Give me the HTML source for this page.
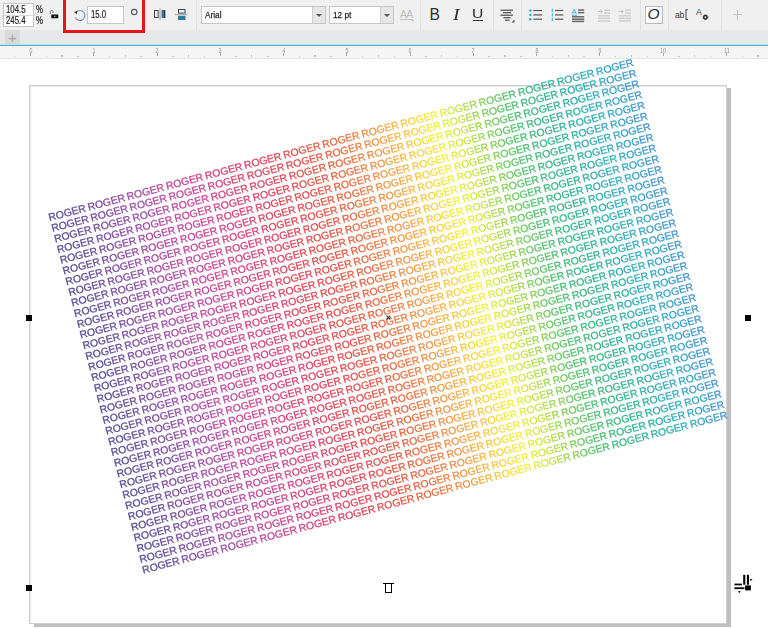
<!DOCTYPE html>
<html>
<head>
<meta charset="utf-8">
<title>Rotate text</title>
<style>
html,body{margin:0;padding:0;}
body{width:768px;height:628px;position:relative;overflow:hidden;background:#fff;font-family:"Liberation Sans",sans-serif;}
.abs{position:absolute;}
#toolbar{left:0;top:0;width:768px;height:30px;background:#f0f0f0;}
#tabstrip{left:0;top:30px;width:768px;height:15px;background:#e7e8e9;}
#tabplus{left:5px;top:30px;width:15px;height:15px;background:#dadada;color:#a6a6a6;font-size:15px;line-height:15px;text-align:center;}
#cyan{left:0;top:44px;width:768px;height:2px;background:linear-gradient(#b4e2ee 0,#b4e2ee 50%,#4fb0cc 50%,#4fb0cc 100%);}
#ruler{left:0;top:46px;width:768px;height:12px;background:#f5f5f5;border-bottom:1px solid #e4e4e4;}
#page{left:29px;top:85px;width:698px;height:539px;border:1px solid #cfcfcf;box-sizing:border-box;background:#fff;box-shadow:inset 1px 1px 0 #e9e9e9;}
#shadR{left:726px;top:88px;width:5px;height:539px;background:#bfbfbf;}
#shadB{left:34px;top:624px;width:697px;height:3px;background:#bfbfbf;}
.h{width:6px;height:6px;background:#000;}
.tb{font-size:11px;color:#222;white-space:nowrap;}
.sq{transform-origin:0 50%;transform:scaleX(0.78);-webkit-text-stroke:0.2px #222;}
.sq2{transform-origin:0 50%;transform:scaleX(0.86);-webkit-text-stroke:0.25px #222;}
.box{background:#fff;border:1px solid #c6c6c6;box-sizing:border-box;}
.sep{width:1px;background:#e0e0e0;top:0px;height:30px;}
#roger{left:0;top:0;width:6400px;transform-origin:0 0;transform:translate(47.2px,212.3px) rotate(-14.9deg) scale(0.1);
 font-family:"Liberation Sans",sans-serif;font-size:104.5px;line-height:110.55px;white-space:pre;word-spacing:-7.5px;
 background:linear-gradient(to right,#48448f 0%,#664496 6%,#8c42a0 12%,#a840a0 17%,#c03c98 22%,#cc3a84 27%,#d83a64 33%,#e04048 40%,#e25636 47%,#ea7c3a 53%,#f2a63a 58%,#f4d030 62%,#f2f028 66%,#c4e038 70%,#90d048 73%,#5cc458 76%,#38b870 80%,#28b088 84%,#22aaa0 88%,#26a8b8 92%,#2c9cc4 96%,#3a8cc8 100%);
 background-size:6050px 100%;background-repeat:no-repeat;
 -webkit-background-clip:text;background-clip:text;color:transparent;-webkit-text-stroke:2.8px transparent;}
.rt{font-size:7px;color:#949494;line-height:7px;transform:scaleX(0.75);}
.tk{width:1px;background:#a8a8a8;}
</style>
</head>
<body>
<div id="toolbar" class="abs"></div>
<div id="tabstrip" class="abs"></div>
<div id="tabplus" class="abs">+</div>
<div id="cyan" class="abs"></div>
<div id="ruler" class="abs"></div>
<div id="shadR" class="abs"></div>
<div id="shadB" class="abs"></div>
<div id="page" class="abs"></div>
<div id="roger" class="abs">ROGER ROGER ROGER ROGER ROGER ROGER ROGER ROGER ROGER ROGER ROGER ROGER ROGER ROGER ROGER
ROGER ROGER ROGER ROGER ROGER ROGER ROGER ROGER ROGER ROGER ROGER ROGER ROGER ROGER ROGER
ROGER ROGER ROGER ROGER ROGER ROGER ROGER ROGER ROGER ROGER ROGER ROGER ROGER ROGER ROGER
ROGER ROGER ROGER ROGER ROGER ROGER ROGER ROGER ROGER ROGER ROGER ROGER ROGER ROGER ROGER
ROGER ROGER ROGER ROGER ROGER ROGER ROGER ROGER ROGER ROGER ROGER ROGER ROGER ROGER ROGER
ROGER ROGER ROGER ROGER ROGER ROGER ROGER ROGER ROGER ROGER ROGER ROGER ROGER ROGER ROGER
ROGER ROGER ROGER ROGER ROGER ROGER ROGER ROGER ROGER ROGER ROGER ROGER ROGER ROGER ROGER
ROGER ROGER ROGER ROGER ROGER ROGER ROGER ROGER ROGER ROGER ROGER ROGER ROGER ROGER ROGER
ROGER ROGER ROGER ROGER ROGER ROGER ROGER ROGER ROGER ROGER ROGER ROGER ROGER ROGER ROGER
ROGER ROGER ROGER ROGER ROGER ROGER ROGER ROGER ROGER ROGER ROGER ROGER ROGER ROGER ROGER
ROGER ROGER ROGER ROGER ROGER ROGER ROGER ROGER ROGER ROGER ROGER ROGER ROGER ROGER ROGER
ROGER ROGER ROGER ROGER ROGER ROGER ROGER ROGER ROGER ROGER ROGER ROGER ROGER ROGER ROGER
ROGER ROGER ROGER ROGER ROGER ROGER ROGER ROGER ROGER ROGER ROGER ROGER ROGER ROGER ROGER
ROGER ROGER ROGER ROGER ROGER ROGER ROGER ROGER ROGER ROGER ROGER ROGER ROGER ROGER ROGER
ROGER ROGER ROGER ROGER ROGER ROGER ROGER ROGER ROGER ROGER ROGER ROGER ROGER ROGER ROGER
ROGER ROGER ROGER ROGER ROGER ROGER ROGER ROGER ROGER ROGER ROGER ROGER ROGER ROGER ROGER
ROGER ROGER ROGER ROGER ROGER ROGER ROGER ROGER ROGER ROGER ROGER ROGER ROGER ROGER ROGER
ROGER ROGER ROGER ROGER ROGER ROGER ROGER ROGER ROGER ROGER ROGER ROGER ROGER ROGER ROGER
ROGER ROGER ROGER ROGER ROGER ROGER ROGER ROGER ROGER ROGER ROGER ROGER ROGER ROGER ROGER
ROGER ROGER ROGER ROGER ROGER ROGER ROGER ROGER ROGER ROGER ROGER ROGER ROGER ROGER ROGER
ROGER ROGER ROGER ROGER ROGER ROGER ROGER ROGER ROGER ROGER ROGER ROGER ROGER ROGER ROGER
ROGER ROGER ROGER ROGER ROGER ROGER ROGER ROGER ROGER ROGER ROGER ROGER ROGER ROGER ROGER
ROGER ROGER ROGER ROGER ROGER ROGER ROGER ROGER ROGER ROGER ROGER ROGER ROGER ROGER ROGER
ROGER ROGER ROGER ROGER ROGER ROGER ROGER ROGER ROGER ROGER ROGER ROGER ROGER ROGER ROGER
ROGER ROGER ROGER ROGER ROGER ROGER ROGER ROGER ROGER ROGER ROGER ROGER ROGER ROGER ROGER
ROGER ROGER ROGER ROGER ROGER ROGER ROGER ROGER ROGER ROGER ROGER ROGER ROGER ROGER ROGER
ROGER ROGER ROGER ROGER ROGER ROGER ROGER ROGER ROGER ROGER ROGER ROGER ROGER ROGER ROGER
ROGER ROGER ROGER ROGER ROGER ROGER ROGER ROGER ROGER ROGER ROGER ROGER ROGER ROGER ROGER
ROGER ROGER ROGER ROGER ROGER ROGER ROGER ROGER ROGER ROGER ROGER ROGER ROGER ROGER ROGER
ROGER ROGER ROGER ROGER ROGER ROGER ROGER ROGER ROGER ROGER ROGER ROGER ROGER ROGER ROGER
ROGER ROGER ROGER ROGER ROGER ROGER ROGER ROGER ROGER ROGER ROGER ROGER ROGER ROGER ROGER
ROGER ROGER ROGER ROGER ROGER ROGER ROGER ROGER ROGER ROGER ROGER ROGER ROGER ROGER ROGER
ROGER ROGER ROGER ROGER ROGER ROGER ROGER ROGER ROGER ROGER ROGER ROGER ROGER ROGER ROGER
ROGER ROGER ROGER ROGER ROGER ROGER ROGER ROGER ROGER ROGER ROGER ROGER ROGER ROGER ROGER</div>
<div class="abs box" style="left:3px;top:3px;width:31px;height:24px;"></div>
<div class="abs" style="left:4px;top:14.5px;width:29px;height:1px;background:#d9d9d9;"></div>
<div class="abs tb sq" style="left:6px;top:3.5px;font-size:10px;line-height:12px;">104.5</div>
<div class="abs tb sq" style="left:6px;top:14.5px;font-size:10px;line-height:12px;">245.4</div>
<div class="abs tb sq" style="left:36px;top:3.5px;font-size:10px;line-height:12px;">%</div>
<div class="abs tb sq" style="left:36px;top:14.5px;font-size:10px;line-height:12px;">%</div>
<svg class="abs" style="left:48px;top:8px" width="12" height="12" viewBox="0 0 12 12"><path d="M2.3 6.2V3.8a1.4 1.4 0 0 1 2.8 0V5" fill="none" stroke="#777" stroke-width="0.9"/><rect x="3.3" y="6.5" width="7" height="3.8" fill="#111"/><rect x="6.2" y="7.8" width="1.2" height="1.2" fill="#bbb"/></svg>
<div class="abs" style="left:63.1px;top:-2.6px;width:81.8px;height:35.8px;border:3.6px solid #e8141a;box-sizing:border-box;"></div>
<svg class="abs" style="left:72px;top:7px" width="16" height="16" viewBox="0 0 16 16"><path d="M4.2 5.2A5 5 0 1 1 3.4 10.6" fill="none" stroke="#7b8fa8" stroke-width="1.1"/><path d="M1.9 5.1l3.4-1.2-.4 3.3z" fill="#333"/></svg>
<div class="abs box" style="left:87px;top:6px;width:37px;height:18px;"></div>
<div class="abs tb sq" style="left:91px;top:8.5px;font-size:10px;line-height:12px;">15.0</div>
<svg class="abs" style="left:129px;top:6px" width="12" height="12" viewBox="0 0 12 12"><circle cx="5.2" cy="6" r="2.7" fill="none" stroke="#555" stroke-width="1.15"/></svg>
<svg class="abs" style="left:152px;top:6px" width="16" height="18" viewBox="0 0 16 18"><rect x="2.5" y="4.5" width="3.6" height="7" fill="none" stroke="#3c4650" stroke-width="1"/><path d="M8 2.5V14.5" stroke="#8a8a8a" stroke-width="0.8"/><rect x="9.6" y="4" width="3.6" height="8" fill="#3c7088"/><rect x="12" y="4" width="1.2" height="8" fill="#2b3c48"/></svg>
<svg class="abs" style="left:173px;top:6px" width="18" height="18" viewBox="0 0 18 18"><rect x="5.5" y="3.5" width="6.5" height="3.6" fill="none" stroke="#3c4650" stroke-width="1"/><path d="M2 8.7H14.5" stroke="#8a8a8a" stroke-width="0.8"/><rect x="5" y="9.8" width="7.5" height="4.2" fill="#2a7c9c"/></svg>
<div class="abs sep" style="left:196px;"></div>
<div class="abs box" style="left:201px;top:6px;width:125px;height:18px;"></div>
<div class="abs" style="left:312px;top:7px;width:13px;height:16px;background:#e6e6e6;border-left:1px solid #cfcfcf;box-sizing:border-box;"></div>
<div class="abs" style="left:316px;top:13.5px;width:0;height:0;border-left:3px solid transparent;border-right:3px solid transparent;border-top:3px solid #555;"></div>
<div class="abs tb sq2" style="left:205px;top:8.5px;font-size:9.6px;line-height:12px;">Arial</div>
<div class="abs box" style="left:329px;top:6px;width:65px;height:18px;"></div>
<div class="abs" style="left:380px;top:7px;width:13px;height:16px;background:#e6e6e6;border-left:1px solid #cfcfcf;box-sizing:border-box;"></div>
<div class="abs" style="left:384px;top:13.5px;width:0;height:0;border-left:3px solid transparent;border-right:3px solid transparent;border-top:3px solid #555;"></div>
<div class="abs tb sq2" style="left:333px;top:8.5px;font-size:9.6px;line-height:12px;">12 pt</div>
<div class="abs tb" style="left:400px;top:7.5px;font-size:10.5px;line-height:12px;color:#bdbdbd;letter-spacing:-0.8px;">AA</div>
<div class="abs" style="left:400px;top:18.5px;width:13px;height:1px;background:#c4c4c4;"></div>
<div class="abs" style="left:411px;top:20px;width:3px;height:1px;background:#c4c4c4;"></div>
<div class="abs sep" style="left:419.5px;"></div>
<div class="abs tb" style="left:429.5px;top:6.3px;font-size:15.6px;line-height:18px;color:#2e2e2e;">B</div>
<div class="abs tb" style="left:452.5px;top:5.6px;font-size:17px;line-height:18px;color:#2e2e2e;font-family:'Liberation Serif',serif;font-style:italic;transform:scaleX(1.15);transform-origin:0 0;">I</div>
<div class="abs tb" style="left:471.6px;top:6.4px;font-size:13.4px;line-height:16px;color:#2e2e2e;transform:scaleX(1.17);transform-origin:0 0;">U</div>
<div class="abs" style="left:472.5px;top:20px;width:10px;height:1.2px;background:#3a3a3a;"></div>
<div class="abs sep" style="left:492.5px;"></div>
<svg class="abs" style="left:499px;top:7px" width="18" height="18" viewBox="0 0 18 18"><g stroke="#4a4a4a" stroke-width="1.2"><path d="M1.5 3.2H14"/><path d="M4 5.7H12"/><path d="M1.5 8.2H14"/><path d="M4.5 10.7H11.5"/><path d="M6 13.2H10.5"/></g><path d="M15.5 12.5v3h-3z" fill="#555"/></svg>
<div class="abs sep" style="left:520.5px;"></div>
<svg class="abs" style="left:527px;top:6px" width="18" height="18" viewBox="0 0 18 18"><g fill="#1fb0d8"><circle cx="3.4" cy="4.5" r="1.2"/><circle cx="3.4" cy="8.9" r="1.2"/><circle cx="3.4" cy="13.2" r="1.2"/></g><g stroke="#555" stroke-width="1.2"><path d="M6.3 4.5H15"/><path d="M6.3 8.9H15"/><path d="M6.3 13.2H15"/></g></svg>
<svg class="abs" style="left:549px;top:6px" width="18" height="18" viewBox="0 0 18 18"><g stroke="#1fb0d8" stroke-width="0.9"><path d="M3.3 2.6V6"/><path d="M3.3 7.2V10.6"/><path d="M3.3 11.6V15"/></g><g stroke="#555" stroke-width="1.2"><path d="M6 4.5H14.3"/><path d="M6 8.9H14.3"/><path d="M6 13.2H14.3"/></g></svg>
<svg class="abs" style="left:570px;top:6px" width="18" height="18" viewBox="0 0 18 18"><text x="1.6" y="8.2" font-family="Liberation Sans, sans-serif" font-size="7.5" fill="#1fa8d0">A</text><path d="M1.8 9.2H7" stroke="#1fa8d0" stroke-width="0.8"/><g stroke="#666" stroke-width="1.5"><path d="M8 4H14.2"/><path d="M8 6.6H14.2"/><path d="M2 10.8H14.2"/><path d="M2 13.2H14.2"/><path d="M2 15.4H14.2"/></g></svg>
<svg class="abs" style="left:596px;top:6px" width="18" height="18" viewBox="0 0 18 18"><g stroke="#cfcfcf" stroke-width="1.5"><path d="M8 4.2H14"/><path d="M8 7H14"/><path d="M2 9.8H14"/><path d="M2 12.4H14"/><path d="M2 15H14"/></g><path d="M2 5.5H6.5M4.5 3.8L6.5 5.5L4.5 7.2" stroke="#c4c4c4" stroke-width="1" fill="none"/></svg>
<svg class="abs" style="left:617px;top:6px" width="18" height="18" viewBox="0 0 18 18"><g stroke="#cfcfcf" stroke-width="1.5"><path d="M8 4.2H14"/><path d="M8 7H14"/><path d="M2 9.8H14"/><path d="M2 12.4H14"/><path d="M2 15H14"/></g><path d="M2 5.5H6.5M4.5 3.8L6.5 5.5L4.5 7.2" stroke="#c4c4c4" stroke-width="1" fill="none"/></svg>
<div class="abs sep" style="left:640px;"></div>
<div class="abs box" style="left:645px;top:6px;width:18px;height:18px;border-color:#b9b9b9;"></div>
<div class="abs tb" style="left:647.5px;top:5px;font-size:15.5px;line-height:18px;color:#2e2e2e;font-style:italic;">O</div>
<div class="abs sep" style="left:668px;"></div>
<div class="abs tb" style="left:675px;top:9.5px;font-size:8.6px;line-height:11px;color:#3a3a3a;letter-spacing:-0.3px;">ab</div>
<svg class="abs" style="left:683px;top:8px" width="6" height="14" viewBox="0 0 6 14"><path d="M2.5 1.3h2.3v1h-1.3v8.8h1.3v1h-2.3z" fill="#444"/></svg>
<div class="abs tb" style="left:696px;top:7px;font-size:8.6px;line-height:10px;color:#3a3a3a;">A</div>
<svg class="abs" style="left:701px;top:13px" width="9" height="9" viewBox="0 0 9 9"><circle cx="4.4" cy="4.3" r="1.7" fill="none" stroke="#2e2e2e" stroke-width="1.5"/><circle cx="4.4" cy="4.3" r="2.5" fill="none" stroke="#2e2e2e" stroke-width="0.7" stroke-dasharray="1 0.96"/></svg>
<div class="abs sep" style="left:721px;"></div>
<div class="abs" style="left:732.5px;top:14.2px;width:9.5px;height:1.1px;background:#c2c2c2;"></div>
<div class="abs" style="left:736.7px;top:10px;width:1.1px;height:9.5px;background:#c2c2c2;"></div>
<div class="abs rt" style="left:24.5px;top:46.6px;width:12px;text-align:center;">0</div>
<div class="abs tk" style="left:30.0px;top:52.6px;height:3.6px;"></div>
<div class="abs rt" style="left:87.8px;top:46.6px;width:12px;text-align:center;">1</div>
<div class="abs tk" style="left:93.3px;top:52.6px;height:3.6px;"></div>
<div class="abs rt" style="left:151.0px;top:46.6px;width:12px;text-align:center;">2</div>
<div class="abs tk" style="left:156.5px;top:52.6px;height:3.6px;"></div>
<div class="abs rt" style="left:214.3px;top:46.6px;width:12px;text-align:center;">3</div>
<div class="abs tk" style="left:219.8px;top:52.6px;height:3.6px;"></div>
<div class="abs rt" style="left:277.6px;top:46.6px;width:12px;text-align:center;">4</div>
<div class="abs tk" style="left:283.1px;top:52.6px;height:3.6px;"></div>
<div class="abs rt" style="left:340.9px;top:46.6px;width:12px;text-align:center;">5</div>
<div class="abs tk" style="left:346.4px;top:52.6px;height:3.6px;"></div>
<div class="abs rt" style="left:404.1px;top:46.6px;width:12px;text-align:center;">6</div>
<div class="abs tk" style="left:409.6px;top:52.6px;height:3.6px;"></div>
<div class="abs rt" style="left:467.4px;top:46.6px;width:12px;text-align:center;">7</div>
<div class="abs tk" style="left:472.9px;top:52.6px;height:3.6px;"></div>
<div class="abs rt" style="left:530.7px;top:46.6px;width:12px;text-align:center;">8</div>
<div class="abs tk" style="left:536.2px;top:52.6px;height:3.6px;"></div>
<div class="abs rt" style="left:593.9px;top:46.6px;width:12px;text-align:center;">9</div>
<div class="abs tk" style="left:599.4px;top:52.6px;height:3.6px;"></div>
<div class="abs rt" style="left:657.2px;top:46.6px;width:12px;text-align:center;">10</div>
<div class="abs tk" style="left:662.7px;top:52.6px;height:3.6px;"></div>
<div class="abs rt" style="left:720.5px;top:46.6px;width:12px;text-align:center;">11</div>
<div class="abs tk" style="left:726.0px;top:52.6px;height:3.6px;"></div>
<div class="abs" style="left:13.9px;top:55.6px;width:1.6px;height:1px;background:#c2c2c2;"></div>
<div class="abs" style="left:45.5px;top:55.6px;width:1.6px;height:1px;background:#c2c2c2;"></div>
<div class="abs" style="left:61.3px;top:54.8px;width:1.4px;height:2px;background:#c2c2c2;"></div>
<div class="abs" style="left:77.2px;top:55.6px;width:1.6px;height:1px;background:#c2c2c2;"></div>
<div class="abs" style="left:108.8px;top:55.6px;width:1.6px;height:1px;background:#c2c2c2;"></div>
<div class="abs" style="left:124.6px;top:54.8px;width:1.4px;height:2px;background:#c2c2c2;"></div>
<div class="abs" style="left:140.4px;top:55.6px;width:1.6px;height:1px;background:#c2c2c2;"></div>
<div class="abs" style="left:172.1px;top:55.6px;width:1.6px;height:1px;background:#c2c2c2;"></div>
<div class="abs" style="left:187.9px;top:54.8px;width:1.4px;height:2px;background:#c2c2c2;"></div>
<div class="abs" style="left:203.7px;top:55.6px;width:1.6px;height:1px;background:#c2c2c2;"></div>
<div class="abs" style="left:235.3px;top:55.6px;width:1.6px;height:1px;background:#c2c2c2;"></div>
<div class="abs" style="left:251.1px;top:54.8px;width:1.4px;height:2px;background:#c2c2c2;"></div>
<div class="abs" style="left:267.0px;top:55.6px;width:1.6px;height:1px;background:#c2c2c2;"></div>
<div class="abs" style="left:298.6px;top:55.6px;width:1.6px;height:1px;background:#c2c2c2;"></div>
<div class="abs" style="left:314.4px;top:54.8px;width:1.4px;height:2px;background:#c2c2c2;"></div>
<div class="abs" style="left:330.2px;top:55.6px;width:1.6px;height:1px;background:#c2c2c2;"></div>
<div class="abs" style="left:361.9px;top:55.6px;width:1.6px;height:1px;background:#c2c2c2;"></div>
<div class="abs" style="left:377.7px;top:54.8px;width:1.4px;height:2px;background:#c2c2c2;"></div>
<div class="abs" style="left:393.5px;top:55.6px;width:1.6px;height:1px;background:#c2c2c2;"></div>
<div class="abs" style="left:425.1px;top:55.6px;width:1.6px;height:1px;background:#c2c2c2;"></div>
<div class="abs" style="left:441.0px;top:54.8px;width:1.4px;height:2px;background:#c2c2c2;"></div>
<div class="abs" style="left:456.8px;top:55.6px;width:1.6px;height:1px;background:#c2c2c2;"></div>
<div class="abs" style="left:488.4px;top:55.6px;width:1.6px;height:1px;background:#c2c2c2;"></div>
<div class="abs" style="left:504.2px;top:54.8px;width:1.4px;height:2px;background:#c2c2c2;"></div>
<div class="abs" style="left:520.0px;top:55.6px;width:1.6px;height:1px;background:#c2c2c2;"></div>
<div class="abs" style="left:551.7px;top:55.6px;width:1.6px;height:1px;background:#c2c2c2;"></div>
<div class="abs" style="left:567.5px;top:54.8px;width:1.4px;height:2px;background:#c2c2c2;"></div>
<div class="abs" style="left:583.3px;top:55.6px;width:1.6px;height:1px;background:#c2c2c2;"></div>
<div class="abs" style="left:614.9px;top:55.6px;width:1.6px;height:1px;background:#c2c2c2;"></div>
<div class="abs" style="left:630.8px;top:54.8px;width:1.4px;height:2px;background:#c2c2c2;"></div>
<div class="abs" style="left:646.6px;top:55.6px;width:1.6px;height:1px;background:#c2c2c2;"></div>
<div class="abs" style="left:678.2px;top:55.6px;width:1.6px;height:1px;background:#c2c2c2;"></div>
<div class="abs" style="left:694.0px;top:54.8px;width:1.4px;height:2px;background:#c2c2c2;"></div>
<div class="abs" style="left:709.9px;top:55.6px;width:1.6px;height:1px;background:#c2c2c2;"></div>
<div class="abs" style="left:741.5px;top:55.6px;width:1.6px;height:1px;background:#c2c2c2;"></div>
<div class="abs" style="left:757.3px;top:54.8px;width:1.4px;height:2px;background:#c2c2c2;"></div>
<div class="abs h" style="left:26px;top:315px;"></div>
<div class="abs h" style="left:745px;top:315px;"></div>
<div class="abs h" style="left:26px;top:585px;"></div>
<svg class="abs" style="left:385px;top:314px" width="7" height="7" viewBox="0 0 7 7"><path d="M1.5 1.7L5.3 5.5M5.3 1.7L1.5 5.5" stroke="#333" stroke-width="1.1"/></svg>
<div class="abs" style="left:383px;top:582.5px;width:10.5px;height:1.3px;background:#000;"></div>
<div class="abs" style="left:384.8px;top:583px;width:7.4px;height:9.6px;border:1.2px solid #000;box-sizing:border-box;background:#fff;"></div>
<svg class="abs" style="left:732px;top:572px" width="24" height="24" viewBox="0 0 24 24"><g fill="#000"><rect x="11.2" y="2.8" width="2.1" height="9.9"/><rect x="14.9" y="2.8" width="2.1" height="9.9"/><path d="M18.3 6.4l2.3 1.3-2.3 1.3z"/><rect x="2.4" y="11.6" width="7.6" height="1.7"/><rect x="2.4" y="15.3" width="10" height="1.8"/><rect x="13.1" y="13.4" width="5.8" height="5"/><path d="M5.8 19.2h3.2l-1.6 1.9z"/></g></svg>
</body>
</html>
